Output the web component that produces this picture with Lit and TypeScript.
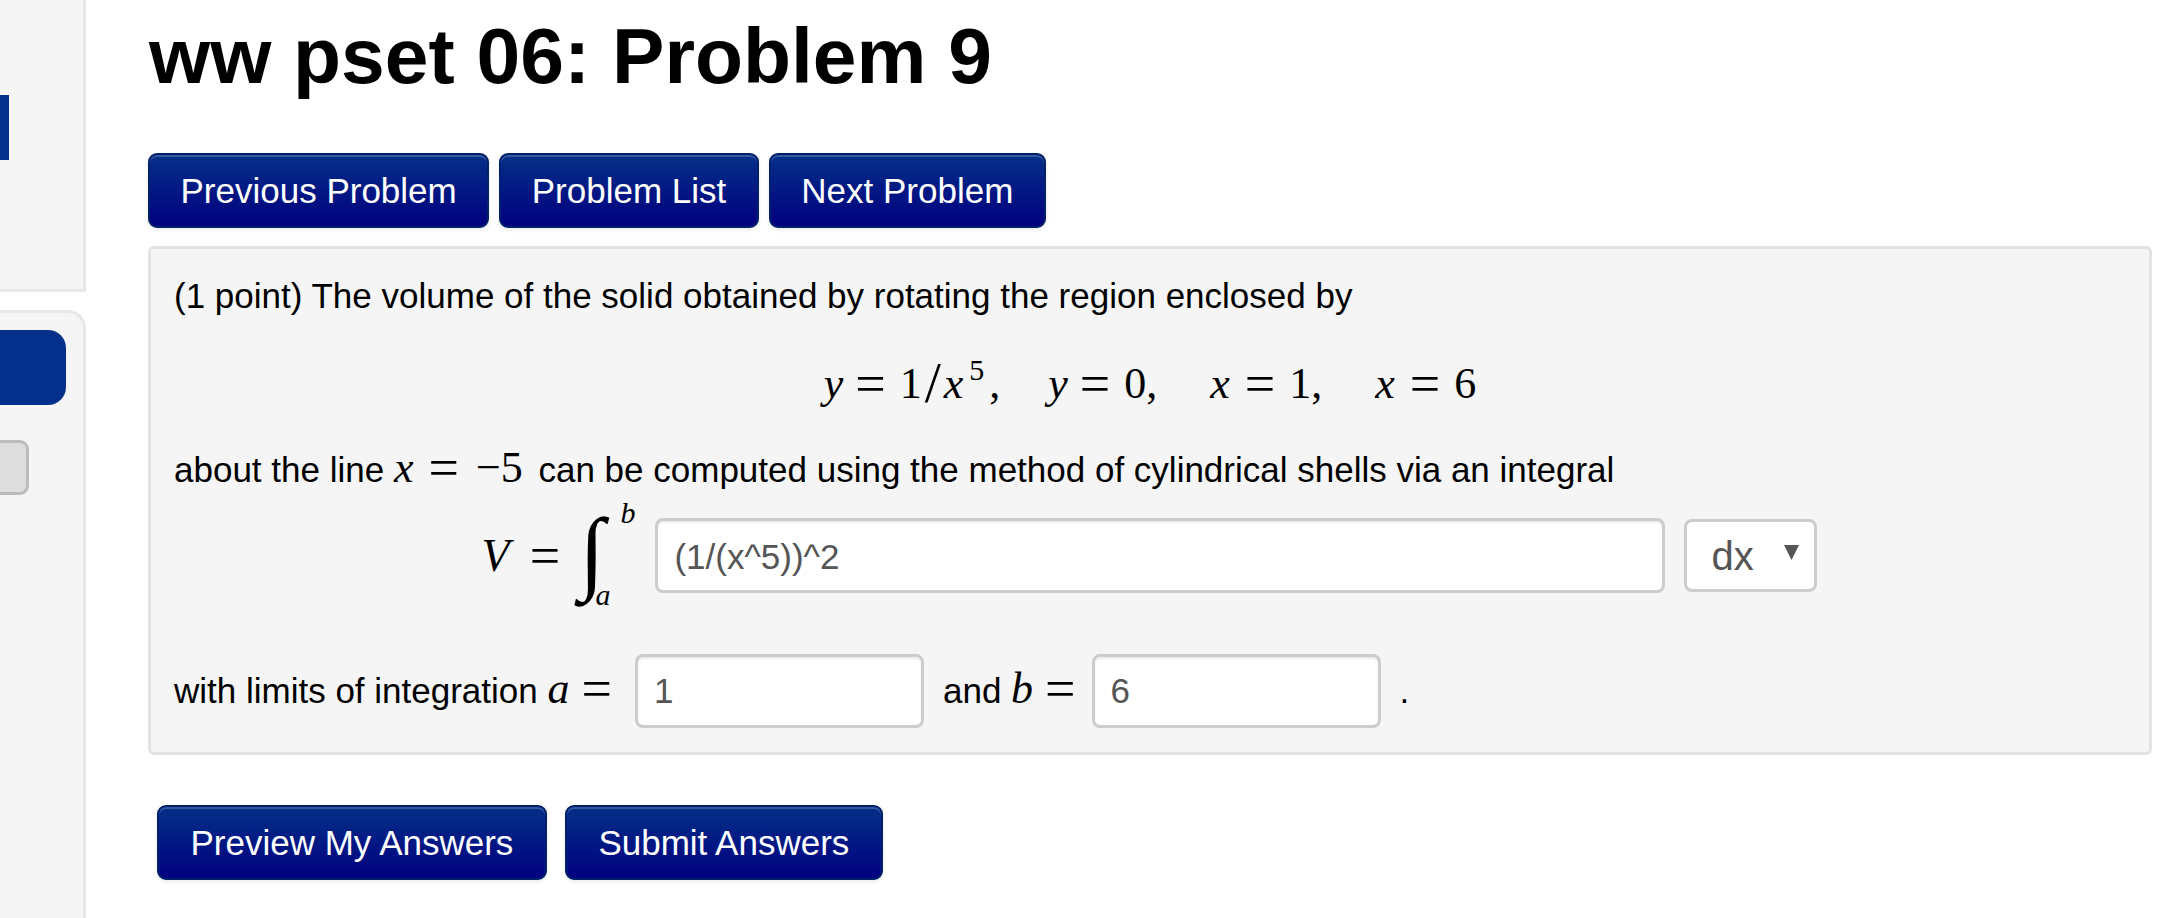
import { LitElement, html, css } from "lit";
import { customElement } from "lit/decorators.js";

@customElement("app-root")
export class AppRoot extends LitElement {
  static styles = css`
    :host { display: block; width: 2171px; height: 918px; overflow: hidden; background: #fff; }
    * { box-sizing: border-box; }
    .page { display: flex; height: 918px; font-family: "Liberation Sans", Arial, sans-serif; color: #000; font-size: 35px; }
    .side { width: 86px; flex: none; display: flex; flex-direction: column; gap: 18px; }
    .nav-top { height: 292px; background: #f5f5f5; border-right: 3px solid #e8e8e8; border-bottom: 3px solid #e8e8e8; padding-top: 95px; }
    .marker { width: 9px; height: 65px; background: #03308a; }
    .nav-bottom { flex: 1; background: #f5f5f5; border: 3px solid #e8e8e8; border-left: 0; border-bottom: 0; border-top-right-radius: 18px; padding-top: 17px; }
    .pill { width: 66px; height: 75px; background: #03308a; border-radius: 0 18px 18px 0; }
    .chip { width: 29px; height: 55px; margin-top: 35px; background: #dddddd; border: 3px solid #bbbbbb; border-left: 0; border-radius: 0 9px 9px 0; }
    .main { flex: 1; padding: 0 19px 0 62px; }
    h1 { margin: 0 0 0 1px; font-size: 78.6px; line-height: 112px; height: 153px; font-weight: 700; }
    .btns { display: flex; gap: 10px; }
    .btn { height: 75px; padding: 0 30.5px; display: flex; align-items: center; color: #fff; font-size: 35px; border: 2px solid #01206a; border-radius: 9px; background: linear-gradient(#043088, #00007f); box-shadow: inset 0 2px 0 rgba(255,255,255,.2), 0 2px 5px rgba(0,0,0,.08); }
    .panel { margin-top: 18px; height: 509px; background: #f5f5f5; border: 3px solid #e3e3e3; border-radius: 6px; padding: 0 23px; }
    .line { height: 45px; line-height: 45px; white-space: nowrap; }
    .first { margin-top: 24px; }
    .display { margin-top: 36px; height: 60px; line-height: 60px; text-align: center; font-size: 44px; white-space: nowrap; font-family: "Liberation Serif", serif; }
    .second { margin-top: 33px; }
    .m { font-family: "Liberation Serif", serif; font-size: 44px; line-height: 0; }
    .i { font-style: italic; }
    .x { margin-right: 3px; }
    .m5 { margin: 0 6px 0 3px; }
    .eq { font-family: "Liberation Serif", serif; font-size: 54px; line-height: 0; margin: 0 14px 0 12px; vertical-align: -4px; }
    .sl { font-size: 58px; line-height: 0; vertical-align: -4px; margin: 0 3px; }
    .sup { font-size: 30px; vertical-align: 18px; line-height: 0; margin-left: 6px; }
    .sep { margin-right: 53px; }
    .sep1 { margin: 0 48px 0 5px; }
    .introw { display: flex; justify-content: center; align-items: center; margin-top: 26px; height: 75px; padding-right: 1px; }
    .intm { display: flex; align-items: center; font-family: "Liberation Serif", serif; font-size: 46px; margin-right: 20px; }
    .v { margin-right: 8px; }
    .int { font-size: 92px; line-height: 75px; font-style: italic; margin: -8px 0 0 5px; letter-spacing: -9px; }
    .lims { display: flex; flex-direction: column; justify-content: space-between; height: 116px; font-style: italic; font-size: 30px; line-height: 34px; margin-top: -4px; }
    .limb { margin-left: 25px; }
    input { font: 35px "Liberation Sans", Arial, sans-serif; color: #555; background: #fff; border: 3px solid #ccc; border-radius: 8px; padding: 0 16px; box-shadow: inset 0 2px 2px rgba(0,0,0,.075); outline: none; display: block; }
    .wide { width: 1010px; height: 75px; padding-top: 2px; padding-left: 16px; }
    .sel { margin-left: 19px; width: 133px; height: 73px; background: #fff; border: 3px solid #ccc; border-radius: 8px; color: #555; display: flex; align-items: center; justify-content: space-between; padding: 2px 15px 0 24px; font-size: 40px; }
    .sel svg { display: block; margin-top: -8px; }
    .lastrow { display: flex; align-items: center; margin-top: 61px; height: 74px; white-space: nowrap; }
    .short { width: 289px; height: 74px; }
    .gapl { margin-left: 9px; }
    .and { margin: 0 2px 0 19px; }
    .dot { margin-left: 19px; }
    .submit { display: flex; gap: 18px; margin-top: 50px; padding-left: 9px; }
    .submit .btn { padding: 0 31.5px; }
  `;

  render() {
    return html`
      <div class="page">
        <aside class="side">
          <div class="nav-top"><div class="marker"></div></div>
          <div class="nav-bottom"><div class="pill"></div><div class="chip"></div></div>
        </aside>
        <main class="main">
          <h1>ww pset 06: Problem 9</h1>
          <div class="btns">
            <div class="btn">Previous Problem</div>
            <div class="btn">Problem List</div>
            <div class="btn">Next Problem</div>
          </div>
          <section class="panel">
            <div class="line first">(1 point) The volume of the solid obtained by rotating the region enclosed by</div>
            <div class="display"><span class="i">y</span><span class="eq">=</span>1<span class="sl">/</span><span class="i">x</span><span class="sup">5</span><span class="sep1">,</span><span class="i">y</span><span class="eq">=</span>0<span class="sep">,</span><span class="i x">x</span><span class="eq">=</span>1<span class="sep">,</span><span class="i x">x</span><span class="eq">=</span>6</div>
            <div class="line second">about the line <span class="m i x">x</span><span class="eq">=</span><span class="m m5">−5</span> can be computed using the method of cylindrical shells via an integral</div>
            <div class="introw">
              <div class="intm"><span class="i v">V</span><span class="eq">=</span><span class="int">∫</span><span class="lims"><span class="limb">b</span><span>a</span></span></div>
              <input class="wide" value="(1/(x^5))^2" />
              <div class="sel"><span>dx</span><svg width="15" height="15" viewBox="0 0 15 15"><path d="M0 0H15L7.5 15Z" fill="#555"/></svg></div>
            </div>
            <div class="lastrow">
              <span>with limits of integration <span class="m i">a</span><span class="eq">=</span></span>
              <input class="short gapl" value="1" />
              <span class="and">and <span class="m i">b</span><span class="eq">=</span></span>
              <input class="short" value="6" />
              <span class="dot">.</span>
            </div>
          </section>
          <div class="submit">
            <div class="btn">Preview My Answers</div>
            <div class="btn">Submit Answers</div>
          </div>
        </main>
      </div>
    `;
  }
}
